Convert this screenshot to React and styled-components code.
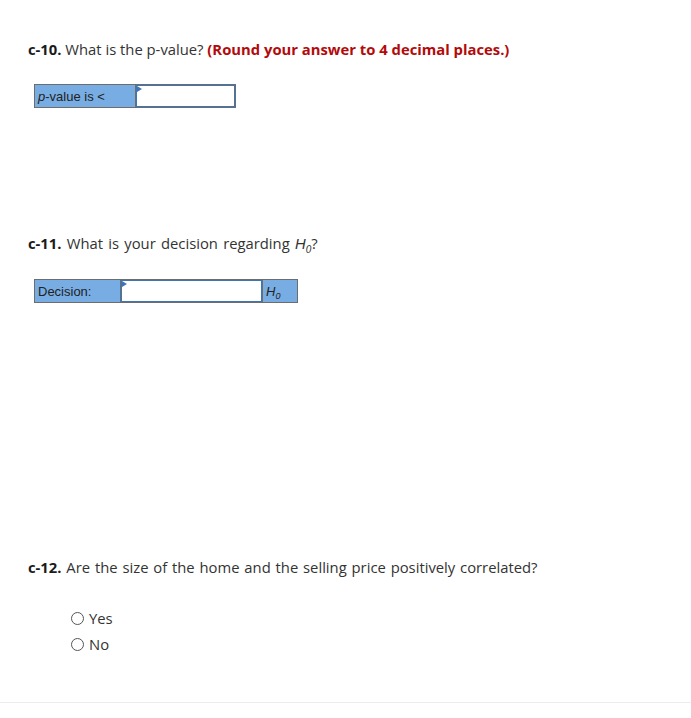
import React from 'react';
import styled, { createGlobalStyle } from 'styled-components';

const GlobalStyle = createGlobalStyle`
    html, body {
        margin: 0;
        padding: 0;
        background: #ffffff;
    }
    body {
        font-family: "Open Sans", "Liberation Sans", sans-serif;
        color: #333;
    }
`;

const Page = styled.div`
    width: 691px;
    height: 718px;
    box-sizing: border-box;
    padding: 38px 0 0 28px;
    position: relative;
`;

const Question = styled.div`
    margin-bottom: ${props => props.$gap}px;
`;

const Heading = styled.p`
    margin: 0;
    font-family: "Open Sans", "Liberation Sans", sans-serif;
    font-size: 14.8px;
    line-height: 22px;
    height: 22px;
    color: #333;
    word-spacing: ${props => props.$ws || 0}px;

    b {
        color: #1a1a1a;
    }

    .note {
        color: #b20a0a;
        font-weight: bold;
    }
`;

const Sym = styled.i`
    font-family: "Liberation Sans", Arial, sans-serif;
    font-style: italic;

    sub {
        font-size: ${props => props.$sub}px;
        vertical-align: baseline;
        position: relative;
        top: 0.35em;
        line-height: 0;
    }
`;

const AnswerTable = styled.div`
    display: flex;
    margin: ${props => props.$top}px 0 0 6px;
    height: 22px;
    border: 1px solid #6d6d6d;
    width: max-content;
    background: #78ade3;
    font-family: "Liberation Sans", Arial, sans-serif;
    font-size: 13px;
    color: #222;
`;

const LabelCell = styled.div`
    width: ${props => props.$w}px;
    box-sizing: border-box;
    display: flex;
    align-items: center;
    padding-left: 3px;
    border-left: ${props => props.$divider ? '1px solid #6d6d6d' : 'none'};
`;

const InputCell = styled.div`
    width: ${props => props.$w}px;
    box-sizing: border-box;
    border-left: 1px solid #6d6d6d;
    position: relative;

    &::before {
        content: '';
        display: block;
        height: 100%;
        box-sizing: border-box;
        background: #fff;
        border: 1px solid #3e75b5;
    }

    &::after {
        content: '';
        position: absolute;
        left: 1px;
        top: 1px;
        border-top: 3px solid transparent;
        border-bottom: 3px solid transparent;
        border-left: 5px solid #3e75b5;
    }
`;

const Options = styled.div`
    margin: 30px 0 0 43px;
    display: flex;
    flex-direction: column;
    gap: 5px;
`;

const Option = styled.label`
    display: flex;
    align-items: center;
    gap: 5px;
    font-size: 14.8px;
    line-height: 21px;
    color: #333;
`;

const Radio = styled.span`
    width: 11px;
    height: 11px;
    border: 1px solid #555;
    border-radius: 50%;
    background: #fff;
`;

const Rule = styled.div`
    position: absolute;
    left: 0;
    right: 0;
    top: 702px;
    border-top: 1px solid #ececec;
`;

export default function App() {
    return (
        <>
            <GlobalStyle />
            <Page>
                <Question $gap={124}>
                    <Heading>
                        <b>c-10.</b> What is the p-value? <span className='note'>(Round your answer to 4 decimal places.)</span>
                    </Heading>
                    <AnswerTable $top={24}>
                        <LabelCell $w={100}><span><i>p</i>-value is &lt;</span></LabelCell>
                        <InputCell $w={100} />
                    </AnswerTable>
                </Question>
                <Question $gap={253}>
                    <Heading $ws={1.4}>
                        <b>c-11.</b> What is your decision regarding <Sym $sub={10}>H<sub>0</sub></Sym>?
                    </Heading>
                    <AnswerTable $top={25}>
                        <LabelCell $w={85}>Decision:</LabelCell>
                        <InputCell $w={142} />
                        <LabelCell $w={35} $divider><Sym $sub={9}>H<sub>0</sub></Sym></LabelCell>
                    </AnswerTable>
                </Question>
                <Question $gap={0}>
                    <Heading $ws={1}>
                        <b>c-12.</b> Are the size of the home and the selling price positively correlated?
                    </Heading>
                    <Options>
                        <Option><Radio />Yes</Option>
                        <Option><Radio />No</Option>
                    </Options>
                </Question>
                <Rule />
            </Page>
        </>
    );
}
